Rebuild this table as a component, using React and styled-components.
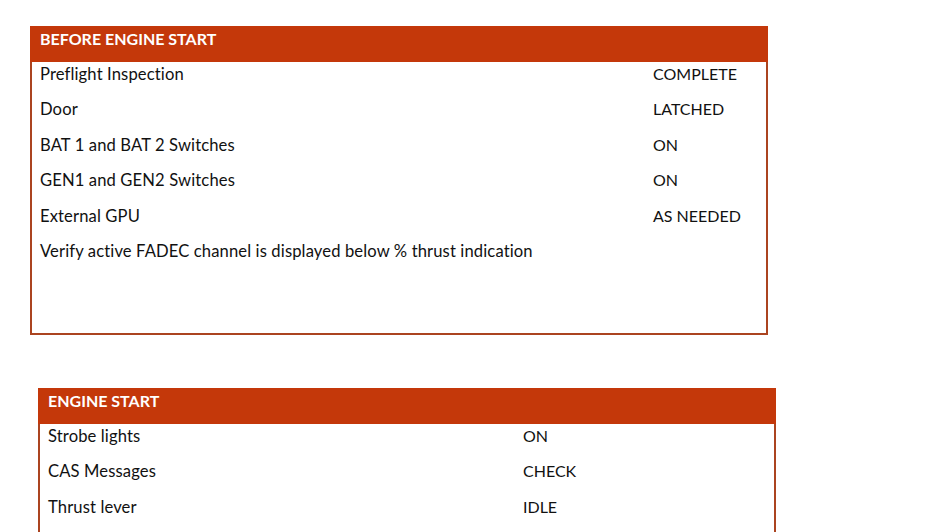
import React from "react";
import styled, { createGlobalStyle } from "styled-components";

const GlobalStyle = createGlobalStyle`
  body {
    margin: 0;
    background: #ffffff;
    font-family: Lato, "Open Sans", sans-serif;
    color: #111111;
  }
`;

const sections = [
  {
    title: "BEFORE ENGINE START",
    offset: 30,
    top: 26,
    valueCol: 613,
    minBody: 271,
    items: [
      ["Preflight Inspection", "COMPLETE"],
      ["Door", "LATCHED"],
      ["BAT 1 and BAT 2 Switches", "ON"],
      ["GEN1 and GEN2 Switches", "ON"],
      ["External GPU", "AS NEEDED"],
      ["Verify active FADEC channel is displayed below % thrust indication", ""],
    ],
  },
  {
    title: "ENGINE START",
    offset: 38,
    top: 53,
    valueCol: 475,
    minBody: 200,
    items: [
      ["Strobe lights", "ON"],
      ["CAS Messages", "CHECK"],
      ["Thrust lever", "IDLE"],
    ],
  },
];

const Page = styled.div`
  width: 945px;
  height: 532px;
  overflow: hidden;
  display: flex;
  flex-direction: column;
`;

const Card = styled.section`
  width: 738px;
  box-sizing: border-box;
  margin-left: ${(p) => p.$offset}px;
  margin-top: ${(p) => p.$top}px;
  border: 2px solid #ab4420;
  border-top: none;
  flex-shrink: 0;
`;

const Header = styled.div`
  height: 36px;
  margin: 0 -2px;
  background: #c4380a;
  color: #ffffff;
  font-weight: 700;
  font-size: 16px;
  line-height: 26px;
  padding-left: 10px;
`;

const Body = styled.div`
  min-height: ${(p) => p.$min}px;
`;

const Row = styled.div`
  display: grid;
  grid-template-columns: ${(p) => p.$valueCol}px 1fr;
  height: 35.4px;
  padding-left: 8px;
  font-size: 16.6px;
  line-height: 24px;
`;

const Label = styled.span`
  white-space: nowrap;
  letter-spacing: 0.12px;
`;

const Value = styled.span`
  white-space: nowrap;
  font-size: 16px;
`;

const Checklist = ({ section }) => (
  <Card $offset={section.offset} $top={section.top}>
    <Header>{section.title}</Header>
    <Body $min={section.minBody}>
      {section.items.map(([label, value]) => (
        <Row key={label} $valueCol={section.valueCol}>
          <Label>{label}</Label>
          <Value>{value}</Value>
        </Row>
      ))}
    </Body>
  </Card>
);

export default function App() {
  return (
    <Page>
      <GlobalStyle />
      {sections.map((s) => (
        <Checklist key={s.title} section={s} />
      ))}
    </Page>
  );
}
